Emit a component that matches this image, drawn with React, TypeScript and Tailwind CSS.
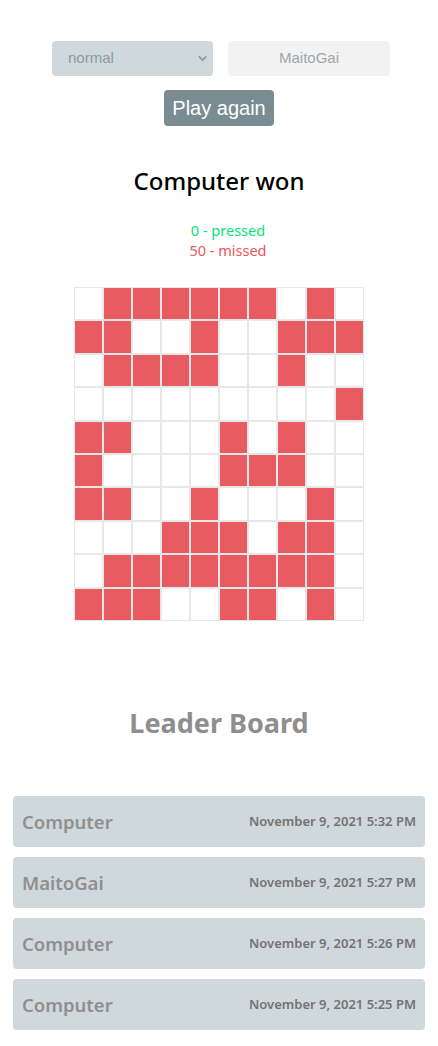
import { ChevronDown } from "lucide-react";

// 1 = missed cell
const BOARD = [
  "0111111010",
  "1100100111",
  "0111100100",
  "0000000001",
  "1100010100",
  "1000011100",
  "1100100010",
  "0001110110",
  "0111111110",
  "1110011010",
];

const LEADERS = [
  { name: "Computer", date: "November 9, 2021 5:32 PM" },
  { name: "MaitoGai", date: "November 9, 2021 5:27 PM" },
  { name: "Computer", date: "November 9, 2021 5:26 PM" },
  { name: "Computer", date: "November 9, 2021 5:25 PM" },
];

export default function App() {
  return (
    <div className="min-h-[1046px] bg-white pb-4 font-['Noto_Sans',sans-serif]">
      <div className="flex justify-center gap-[15px] pl-[4px] pt-[41px] font-['Liberation_Sans',sans-serif] text-[15px]">
        <div className="flex h-[35px] w-[161px] items-center justify-between rounded bg-[#cfd8dc] pl-[16px] pr-[4px] text-[#8b9aa1]">
          <span>normal</span>
          <ChevronDown size={13} strokeWidth={3} className="text-[#8b9aa1]" />
        </div>
        <div className="flex h-[35px] w-[162px] items-center justify-center rounded bg-[#f2f2f2] text-[#9ca6ac]">
          MaitoGai
        </div>
      </div>

      <div className="mt-[14px] flex justify-center">
        <button className="h-[36px] w-[110px] rounded bg-[#798c91] font-['Liberation_Sans',sans-serif] text-[20px] text-white">
          Play again
        </button>
      </div>

      <h1 className="mt-[39px] text-center text-[24px] font-medium leading-[32px] text-black">Computer won</h1>

      <div className="mt-[23px] pl-[18px] text-center text-[14.5px] leading-[20px]">
        <p className="text-[#00e676]">0 - pressed</p>
        <p className="text-[#e8575e]">50 - missed</p>
      </div>

      <div className="mx-auto mt-[27px] grid h-[334px] w-[290px] grid-cols-10 grid-rows-10">
        {BOARD.flatMap((row, r) =>
          row.split("").map((c, i) => (
            <div
              key={`${r}-${i}`}
              className={c === "1" ? "border border-[#e8e8e8] bg-[#e85b60]" : "border border-[#e8e8e8] bg-white"}
            />
          ))
        )}
      </div>

      <h2 className="mt-[84px] text-center text-[27px] font-bold leading-[36px] text-[#8e8e8e]">Leader Board</h2>

      <ul className="mx-[13px] mt-[55px] flex flex-col gap-[10px]">
        {LEADERS.map((l, i) => (
          <li key={i} className="flex h-[51px] items-center justify-between rounded bg-[#cfd8dc] pl-[9px] pr-[9px]">
            <span className="text-[18.5px] font-semibold text-[#8f8f8f]">{l.name}</span>
            <span className="text-[13px] font-semibold text-[#737373]">{l.date}</span>
          </li>
        ))}
      </ul>
    </div>
  );
}
